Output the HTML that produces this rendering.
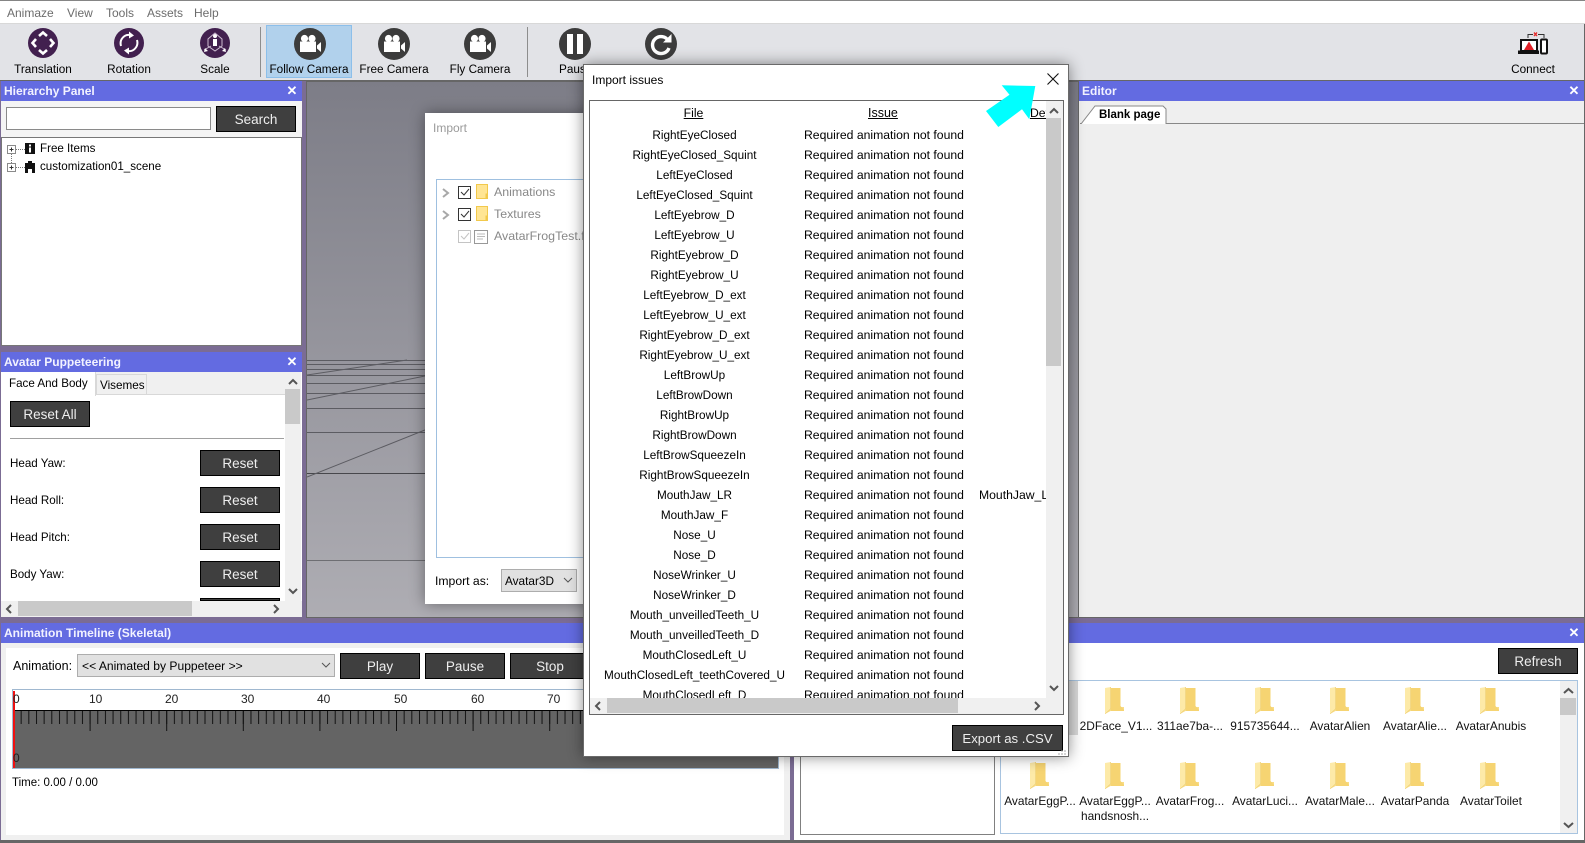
<!DOCTYPE html>
<html><head><meta charset="utf-8"><title>Animaze</title>
<style>
html,body{margin:0;padding:0;width:1585px;height:843px;overflow:hidden;background:#7b6c94;font-family:"Liberation Sans",sans-serif;font-size:12.5px;color:#000}
div,span,svg{position:absolute;box-sizing:border-box}
.t{white-space:nowrap;line-height:16px;height:16px;font-size:11.75px}
.c{text-align:center}
.title{background:#636be1;color:#f2f2ff;font-weight:bold;font-size:12px;line-height:20px;height:20px;padding-left:3px;white-space:nowrap}
.x{color:#fff;font-size:13px;font-weight:bold;width:12px;height:20px;line-height:20px;text-align:center}
.btn{background:#3f3f3f;border:1px solid #000;color:#eee;text-align:center;font-size:13.5px;white-space:nowrap}
.lab{font-size:11.6px;white-space:nowrap;line-height:16px;height:16px}
.sb{background:#f0f0f0}
.th{background:#c9c9c9}
.r{left:0;width:456px;height:20px;line-height:20px;white-space:nowrap;font-size:12.2px}
.r b{font-weight:normal;font-size:11.75px;position:absolute;left:4px;width:201px;text-align:center;top:1px}
.r i{font-style:normal;position:absolute;left:214px;top:0}
.tl{font-size:12px;line-height:14px;height:14px;top:692px;color:#222}
.fn{width:76px;text-align:center;font-size:11.9px;line-height:15px;white-space:nowrap;color:#111}
</style></head><body>
<svg width="0" height="0" style="position:absolute">
<defs>
<symbol id="folder" viewBox="0 0 19 27"><path d="M0 1H13V20H19V24H5.5L0 27Z" fill="#f8dd88"/><path d="M0 1L6 0V21L0 27Z" fill="#fdeaa8"/><path d="M6 1H15.5V19L19 23V24H6Z" fill="#f6d472"/><path d="M5.5 0V22L0 27" fill="none" stroke="#e9c765" stroke-width=".5"/></symbol>
<symbol id="cam" viewBox="0 0 32 32"><circle cx="16" cy="16" r="16" fill="#3c3c3c"/><circle cx="10.5" cy="10.5" r="3.6" fill="#fff"/><circle cx="18" cy="10.5" r="3.6" fill="#fff"/><path d="M6 13.5H22V24H6Z" fill="#fff"/><path d="M23 17.5L27 14V24L23 20.5Z" fill="#fff"/></symbol>
<symbol id="sf" viewBox="0 0 12 15"><path d="M.5.5H11.5V14.5H.5Z" fill="#ffe594" stroke="#f2c94c"/><path d="M9.500 9.500H11.500V14.500H9.500Z" fill="#f2c94c"/></symbol>
</defs>
</svg>

<!-- menu -->
<div style="left:0;top:0;width:1585px;height:24px;background:#fff;border-top:1px solid #858585;border-bottom:1px solid #d8d8d8"></div>
<div class="t" style="left:7px;top:5px;color:#6c6c6c;font-size:12px">Animaze</div>
<div class="t" style="left:67px;top:5px;color:#6c6c6c;font-size:12px">View</div>
<div class="t" style="left:106px;top:5px;color:#6c6c6c;font-size:12px">Tools</div>
<div class="t" style="left:147px;top:5px;color:#6c6c6c;font-size:12px">Assets</div>
<div class="t" style="left:194px;top:5px;color:#6c6c6c;font-size:12px">Help</div>

<!-- toolbar -->
<div style="left:0;top:24px;width:1585px;height:57px;background:#e2e3e7;border-bottom:1px solid #666"></div>
<div style="left:260px;top:27px;width:1px;height:50px;background:#8d8d8d"></div>
<div style="left:527px;top:27px;width:1px;height:50px;background:#8d8d8d"></div>
<div style="left:266px;top:25px;width:86px;height:53px;background:#b1d1ec;border:1px solid #8cbfea"></div>

<svg style="left:28px;top:28px" width="30" height="30" viewBox="0 0 30 30"><circle cx="15" cy="15" r="15" fill="#42204f"/><path d="M11 8L15 4.500L19 8M11 22L15 25.500L19 22M8 11L4.500 15L8 19M22 11L25.500 15L22 19" fill="none" stroke="#fff" stroke-width="2.600"/></svg>
<svg style="left:114px;top:28px" width="30" height="30" viewBox="0 0 30 30"><circle cx="15" cy="15" r="15" fill="#42204f"/><path d="M7 18C5 11 11 6 16 7M23 12C25 19 19 24 14 23" fill="none" stroke="#fff" stroke-width="2"/><path d="M15 3.500L20 7.500L15 10.500ZM15 26.500L10 22.500L15 19.500Z" fill="#fff"/></svg>
<svg style="left:200px;top:28px" width="30" height="30" viewBox="0 0 30 30"><circle cx="15" cy="15" r="15" fill="#42204f"/><circle cx="15" cy="8" r="2" fill="#fff"/><path d="M13 11H17V18H13Z" fill="#fff"/><path d="M15 5L8 11V18L15 23L22 18V11ZM4 22L11 18M26 22L19 18" fill="none" stroke="#cdbcd2" stroke-width="1"/><path d="M4 24L5 20L8 23ZM26 24L25 20L22 23Z" fill="#fff"/></svg>
<svg style="left:294px;top:28px" width="32" height="32"><use href="#cam"/></svg>
<svg style="left:378px;top:28px" width="32" height="32"><use href="#cam"/></svg>
<svg style="left:464px;top:28px" width="32" height="32"><use href="#cam"/></svg>
<svg style="left:559px;top:28px" width="32" height="32" viewBox="0 0 32 32"><circle cx="16" cy="16" r="16" fill="#3c3c3c"/><path d="M8 6H14V26H8ZM18 6H24V26H18Z" fill="#fff"/></svg>
<svg style="left:645px;top:28px" width="32" height="32" viewBox="0 0 32 32"><circle cx="16" cy="16" r="16" fill="#3c3c3c"/><path d="M23.500 13A8.500 8.500 0 1 0 24 20" fill="none" stroke="#fff" stroke-width="3.400"/><path d="M18 14.500H26.500V6Z" fill="#fff"/></svg>
<svg style="left:1517px;top:30px" width="32" height="26" viewBox="0 0 32 26"><path d="M11 8V4.500H16M21 4.500H27V8" fill="none" stroke="#333"/><path d="M17 2.500L20 6M20 2.500L17 6" stroke="#e53030" stroke-width="1.400"/><rect x="4" y="10" width="16" height="11" fill="#fff" stroke="#111" stroke-width="2"/><path d="M1 20.500H22V24H1Z" fill="#111"/><path d="M12 11.500L17 20H7Z" fill="#e01f26"/><rect x="24" y="9.500" width="6" height="14" rx="1" fill="#fff" stroke="#111" stroke-width="2"/></svg>

<div class="t c" style="left:3px;width:80px;top:62px">Translation</div>
<div class="t c" style="left:89px;width:80px;top:62px">Rotation</div>
<div class="t c" style="left:175px;width:80px;top:62px">Scale</div>
<div class="t c" style="left:266px;width:86px;top:62px">Follow Camera</div>
<div class="t c" style="left:352px;width:84px;top:62px">Free Camera</div>
<div class="t c" style="left:438px;width:84px;top:62px">Fly Camera</div>
<div class="t" style="left:559px;top:62px">Pause</div>
<div class="t c" style="left:621px;width:80px;top:62px">Reload Skin</div>
<div class="t c" style="left:1493px;width:80px;top:62px">Connect</div>

<!-- viewport -->
<div style="left:306px;top:81px;width:773px;height:537px;background:linear-gradient(#7d7d87,#aeadb3);border:1px solid #666"></div>
<svg style="left:307px;top:340px" width="118" height="278" viewBox="0 0 118 278"><g stroke="#5c5c62" stroke-width="1" fill="none"><path d="M0 20.500H118M0 24.500H118M0 29.500H118M0 35.500H118M0 43.500H118M0 53.500H118M0 68.500H118M0 92.500H118"/><path d="M0 133.500H118" stroke="#47474c"/><path d="M0 220.500H118" stroke="#6e6e73"/><path d="M0 35L100 20M0 60L118 36M0 137L118 90"/></g></svg>

<!-- hierarchy panel -->
<div style="left:1px;top:81px;width:301px;height:265px;background:#f4f4f4"></div>
<div class="title" style="left:1px;top:81px;width:301px">Hierarchy Panel</div>
<div class="x" style="left:286px;top:81px">✕</div>
<div style="left:6px;top:107px;width:205px;height:23px;background:#fff;border:1px solid #8a8a8a"></div>
<div class="btn" style="left:216px;top:106px;width:80px;height:26px;line-height:25px">Search</div>
<div style="left:1px;top:137px;width:301px;height:209px;background:#fff;border:1px solid #777"></div>
<svg style="left:6px;top:141px" width="20" height="34" viewBox="0 0 20 34"><g fill="#fff" stroke="#8a8a8a"><rect x="1.500" y="4.500" width="8" height="8"/><rect x="1.500" y="22.500" width="8" height="8"/></g><path d="M3.500 8.500H7.500M5.500 6.500V10.500M3.500 26.500H7.500M5.500 24.500V28.500" stroke="#333"/><path d="M10 8.500H19M10 26.500H19M5.500 13V22" stroke="#777" stroke-dasharray="1 1"/></svg>
<svg style="left:25px;top:143px" width="10" height="33" viewBox="0 0 10 33"><rect width="10" height="11" fill="#111"/><rect x="4" y="1.500" width="2" height="2" fill="#fff"/><rect x="4" y="4.500" width="2" height="5" fill="#fff"/><path d="M0 20H10V30H7V26H3V30H0Z" fill="#111"/><path d="M3 18H7V21H3Z" fill="#111"/></svg>
<div class="lab" style="left:40px;top:141px">Free Items</div>
<div class="lab" style="left:40px;top:159px">customization01_scene</div>

<!-- puppeteering -->
<div style="left:1px;top:352px;width:301px;height:265px;background:#fff"></div>
<div class="title" style="left:1px;top:352px;width:301px">Avatar Puppeteering</div>
<div class="x" style="left:286px;top:352px">✕</div>
<div style="left:1px;top:372px;width:284px;height:23px;background:#f0f0f0;border-bottom:1px solid #d8d8d8"></div>
<div style="left:1px;top:372px;width:95px;height:24px;background:#fff;border-right:1px solid #d8d8d8"></div>
<div style="left:96px;top:374px;width:51px;height:21px;background:#f0f0f0;border:1px solid #d8d8d8"></div>
<div class="lab" style="left:9px;top:376px">Face And Body</div>
<div class="lab" style="left:100px;top:378px;font-size:11.7px">Visemes</div>
<div class="btn" style="left:10px;top:401px;width:80px;height:26px;line-height:25px">Reset All</div>
<div style="left:10px;top:438px;width:274px;height:1px;background:#a0a0a0"></div>
<div class="lab" style="left:10px;top:456px">Head Yaw:</div>
<div class="lab" style="left:10px;top:493px">Head Roll:</div>
<div class="lab" style="left:10px;top:530px">Head Pitch:</div>
<div class="lab" style="left:10px;top:567px">Body Yaw:</div>
<div class="btn" style="left:200px;top:450px;width:80px;height:26px;line-height:25px">Reset</div>
<div class="btn" style="left:200px;top:487px;width:80px;height:26px;line-height:25px">Reset</div>
<div class="btn" style="left:200px;top:524px;width:80px;height:26px;line-height:25px">Reset</div>
<div class="btn" style="left:200px;top:561px;width:80px;height:26px;line-height:25px">Reset</div>
<div class="btn" style="left:200px;top:598px;width:80px;height:3px"></div>
<div class="sb" style="left:285px;top:372px;width:16px;height:229px"></div>
<div class="th" style="left:285px;top:389px;width:15px;height:35px"></div>
<svg style="left:285px;top:372px" width="16" height="229" viewBox="0 0 16 229"><path d="M4 12L8 8L12 12M4 217L8 221L12 217" fill="none" stroke="#555" stroke-width="2"/></svg>
<div class="sb" style="left:1px;top:601px;width:301px;height:16px"></div>
<div class="th" style="left:18px;top:601px;width:174px;height:15px"></div>
<svg style="left:1px;top:601px" width="300" height="16" viewBox="0 0 300 16"><path d="M10 4L6 8L10 12M273 4L277 8L273 12" fill="none" stroke="#555" stroke-width="2"/></svg>

<!-- editor -->
<div style="left:1079px;top:81px;width:505px;height:537px;background:#efefef;border-bottom:1px solid #666"></div>
<div class="title" style="left:1079px;top:81px;width:505px">Editor</div>
<div class="x" style="left:1568px;top:81px">✕</div>
<div style="left:1080px;top:123px;width:504px;height:1px;background:#888"></div>
<svg style="left:1080px;top:105px" width="90" height="19" viewBox="0 0 90 19"><path d="M1 19L15 1H83L86 4V19" fill="#fff" stroke="#888"/></svg>
<div class="lab" style="left:1099px;top:107px;font-weight:bold;font-size:11.5px;color:#000">Blank page</div>

<!-- import dialog behind -->
<div style="left:425px;top:113px;width:200px;height:491px;background:#fff;box-shadow:0 0 14px rgba(0,0,0,.4)"></div>
<div class="lab" style="left:433px;top:120px;color:#9a9a9a;font-size:12px">Import</div>
<div style="left:436px;top:179px;width:170px;height:379px;border:1px solid #9fc0e0;background:#fff"></div>
<svg style="left:440px;top:186px" width="50" height="60" viewBox="0 0 50 60"><path d="M3 3L8 7L3 11M3 25L8 29L3 33" fill="none" stroke="#a8a8a8" stroke-width="2"/><rect x="18.500" y="0.500" width="12" height="12" fill="#fff" stroke="#333"/><rect x="18.500" y="22.500" width="12" height="12" fill="#fff" stroke="#333"/><rect x="18.500" y="44.500" width="12" height="12" fill="#fff" stroke="#c4c4c4"/><path d="M21 6L24 9L29 3M21 28L24 31L29 25" fill="none" stroke="#333"/><path d="M21 50L24 53L29 47" fill="none" stroke="#c4c4c4"/><rect x="34.500" y="44.500" width="13" height="13" fill="#fff" stroke="#999"/><path d="M37 48H45M37 50.500H45M37 53H43" stroke="#bbb"/></svg>
<svg style="left:476px;top:184px" width="12" height="15"><use href="#sf"/></svg>
<svg style="left:476px;top:206px" width="12" height="15"><use href="#sf"/></svg>
<div class="lab" style="left:494px;top:184px;color:#888;font-size:12.4px">Animations</div>
<div class="lab" style="left:494px;top:206px;color:#888;font-size:12.4px">Textures</div>
<div class="lab" style="left:494px;top:228px;color:#888;font-size:12.4px">AvatarFrogTest.fbx</div>
<div class="lab" style="left:435px;top:573px;font-size:12.2px">Import as:</div>
<div style="left:501px;top:569px;width:76px;height:23px;background:#e1e1e1;border:1px solid #adadad"></div>
<div class="lab" style="left:505px;top:573px;font-size:11.8px">Avatar3D</div>
<svg style="left:563px;top:577px" width="10" height="7" viewBox="0 0 10 7"><path d="M1 1L5 5L9 1" fill="none" stroke="#555"/></svg>

<!-- timeline panel -->
<div style="left:1px;top:623px;width:789px;height:217px;background:#f0f0f0"></div>
<div class="title" style="left:1px;top:623px;width:789px">Animation Timeline (Skeletal)</div>
<div style="left:6px;top:648px;width:778px;height:187px;background:#fff"></div>
<div class="lab" style="left:13px;top:658px;font-size:12.5px">Animation:</div>
<div style="left:77px;top:654px;width:258px;height:23px;background:#e1e1e1;border:1px solid #adadad"></div>
<div class="lab" style="left:82px;top:658px;font-size:12.1px">&lt;&lt; Animated by Puppeteer &gt;&gt;</div>
<svg style="left:321px;top:662px" width="10" height="7" viewBox="0 0 10 7"><path d="M1 1L5 5L9 1" fill="none" stroke="#555"/></svg>
<div class="btn" style="left:340px;top:653px;width:80px;height:26px;line-height:25px">Play</div>
<div class="btn" style="left:425px;top:653px;width:80px;height:26px;line-height:25px">Pause</div>
<div class="btn" style="left:510px;top:653px;width:80px;height:26px;line-height:25px">Stop</div>
<div style="left:12px;top:689px;width:767px;height:80px;border:1px solid #a0b8d0;background:#646464"></div>
<div style="left:13px;top:690px;width:765px;height:21px;background:#fff;border-bottom:1px solid #000"></div>
<svg style="left:13px;top:711px" width="765" height="22"><defs><pattern id="mn" x="0" y="0" width="7.660" height="22" patternUnits="userSpaceOnUse"><rect width="1" height="13" fill="#111"/></pattern><pattern id="mj" x="0" y="0" width="76.600" height="22" patternUnits="userSpaceOnUse"><rect width="1" height="20" fill="#111"/></pattern></defs><rect width="765" height="22" fill="url(#mn)"/><rect width="765" height="22" fill="url(#mj)"/></svg>
<div style="left:13px;top:691px;width:2px;height:77px;background:#f01010"></div>
<div class="tl" style="left:13px">0</div>
<div class="tl" style="left:89px">10</div>
<div class="tl" style="left:165px">20</div>
<div class="tl" style="left:241px">30</div>
<div class="tl" style="left:317px">40</div>
<div class="tl" style="left:394px">50</div>
<div class="tl" style="left:471px">60</div>
<div class="tl" style="left:547px">70</div>
<div class="tl" style="left:13px;top:751px">0</div>
<div class="lab" style="left:12px;top:775px;font-size:11.5px">Time: 0.00 / 0.00</div>

<!-- assets panel -->
<div style="left:794px;top:623px;width:790px;height:217px;background:#fff"></div>
<div class="title" style="left:794px;top:623px;width:790px"></div>
<div class="x" style="left:1568px;top:623px">✕</div>
<div class="btn" style="left:1498px;top:648px;width:80px;height:26px;line-height:25px">Refresh</div>
<div style="left:800px;top:680px;width:195px;height:155px;background:#fff;border:1px solid #808080"></div>
<div style="left:1000px;top:680px;width:578px;height:154px;background:#fff;border:1px solid #a8c4e0"></div>
<div style="left:1002px;top:681px;width:76px;height:54px;background:#d9d9d9"></div>
<div class="sb" style="left:1560px;top:681px;width:17px;height:152px"></div>
<div class="th" style="left:1560px;top:698px;width:16px;height:17px"></div>
<svg style="left:1560px;top:681px" width="17" height="152" viewBox="0 0 17 152"><path d="M4 12L8.500 8L13 12M4 142L8.500 146L13 142" fill="none" stroke="#555" stroke-width="2"/></svg>
<svg style="left:1105px;top:687px" width="19" height="27"><use href="#folder"/></svg>
<svg style="left:1180px;top:687px" width="19" height="27"><use href="#folder"/></svg>
<svg style="left:1255px;top:687px" width="19" height="27"><use href="#folder"/></svg>
<svg style="left:1330px;top:687px" width="19" height="27"><use href="#folder"/></svg>
<svg style="left:1405px;top:687px" width="19" height="27"><use href="#folder"/></svg>
<svg style="left:1480px;top:687px" width="19" height="27"><use href="#folder"/></svg>
<svg style="left:1030px;top:762px" width="19" height="27"><use href="#folder"/></svg>
<svg style="left:1105px;top:762px" width="19" height="27"><use href="#folder"/></svg>
<svg style="left:1180px;top:762px" width="19" height="27"><use href="#folder"/></svg>
<svg style="left:1255px;top:762px" width="19" height="27"><use href="#folder"/></svg>
<svg style="left:1330px;top:762px" width="19" height="27"><use href="#folder"/></svg>
<svg style="left:1405px;top:762px" width="19" height="27"><use href="#folder"/></svg>
<svg style="left:1480px;top:762px" width="19" height="27"><use href="#folder"/></svg>
<div class="fn" style="left:1078px;top:719px">2DFace_V1...</div>
<div class="fn" style="left:1152px;top:719px">311ae7ba-...</div>
<div class="fn" style="left:1227px;top:719px">915735644...</div>
<div class="fn" style="left:1302px;top:719px">AvatarAlien</div>
<div class="fn" style="left:1377px;top:719px">AvatarAlie...</div>
<div class="fn" style="left:1453px;top:719px">AvatarAnubis</div>
<div class="fn" style="left:1002px;top:794px">AvatarEggP...</div>
<div class="fn" style="left:1077px;top:794px">AvatarEggP...<br>handsnosh...</div>
<div class="fn" style="left:1152px;top:794px">AvatarFrog...</div>
<div class="fn" style="left:1227px;top:794px">AvatarLuci...</div>
<div class="fn" style="left:1302px;top:794px">AvatarMale...</div>
<div class="fn" style="left:1377px;top:794px">AvatarPanda</div>
<div class="fn" style="left:1453px;top:794px">AvatarToilet</div>

<div style="left:0;top:840px;width:1585px;height:3px;background:#666"></div>
<div style="left:1584px;top:24px;width:1px;height:819px;background:#666"></div>

<!-- import issues dialog -->
<div style="left:583px;top:64px;width:486px;height:693px;background:#fff;border:1px solid #6a6a6a;box-shadow:0 0 14px rgba(0,0,0,.45)"></div>
<div class="lab" style="left:592px;top:72px;font-size:12px">Import issues</div>
<svg style="left:1047px;top:73px" width="12" height="12" viewBox="0 0 12 12"><path d="M.5.500L11.500 11.500M11.500.500L.5 11.500" stroke="#111" stroke-width="1.100"/></svg>
<div style="left:589px;top:100px;width:475px;height:615px;border:1px solid #666;background:#fff"></div>
<div style="left:590px;top:101px;width:456px;height:597px;overflow:hidden;background:#fff">
<div class="r" style="top:2px"><b style="text-decoration:underline;font-size:12.2px;left:3px;top:0">File</b><i style="left:278px;text-decoration:underline;font-size:12.5px">Issue</i><i style="left:440px;text-decoration:underline">Details</i></div>
<div class="r" style="top:24px"><b>RightEyeClosed</b><i>Required animation not found</i></div>
<div class="r" style="top:44px"><b>RightEyeClosed_Squint</b><i>Required animation not found</i></div>
<div class="r" style="top:64px"><b>LeftEyeClosed</b><i>Required animation not found</i></div>
<div class="r" style="top:84px"><b>LeftEyeClosed_Squint</b><i>Required animation not found</i></div>
<div class="r" style="top:104px"><b>LeftEyebrow_D</b><i>Required animation not found</i></div>
<div class="r" style="top:124px"><b>LeftEyebrow_U</b><i>Required animation not found</i></div>
<div class="r" style="top:144px"><b>RightEyebrow_D</b><i>Required animation not found</i></div>
<div class="r" style="top:164px"><b>RightEyebrow_U</b><i>Required animation not found</i></div>
<div class="r" style="top:184px"><b>LeftEyebrow_D_ext</b><i>Required animation not found</i></div>
<div class="r" style="top:204px"><b>LeftEyebrow_U_ext</b><i>Required animation not found</i></div>
<div class="r" style="top:224px"><b>RightEyebrow_D_ext</b><i>Required animation not found</i></div>
<div class="r" style="top:244px"><b>RightEyebrow_U_ext</b><i>Required animation not found</i></div>
<div class="r" style="top:264px"><b>LeftBrowUp</b><i>Required animation not found</i></div>
<div class="r" style="top:284px"><b>LeftBrowDown</b><i>Required animation not found</i></div>
<div class="r" style="top:304px"><b>RightBrowUp</b><i>Required animation not found</i></div>
<div class="r" style="top:324px"><b>RightBrowDown</b><i>Required animation not found</i></div>
<div class="r" style="top:344px"><b>LeftBrowSqueezeIn</b><i>Required animation not found</i></div>
<div class="r" style="top:364px"><b>RightBrowSqueezeIn</b><i>Required animation not found</i></div>
<div class="r" style="top:384px"><b>MouthJaw_LR</b><i>Required animation not found</i><i style="left:389px">MouthJaw_LR</i></div>
<div class="r" style="top:404px"><b>MouthJaw_F</b><i>Required animation not found</i></div>
<div class="r" style="top:424px"><b>Nose_U</b><i>Required animation not found</i></div>
<div class="r" style="top:444px"><b>Nose_D</b><i>Required animation not found</i></div>
<div class="r" style="top:464px"><b>NoseWrinker_U</b><i>Required animation not found</i></div>
<div class="r" style="top:484px"><b>NoseWrinker_D</b><i>Required animation not found</i></div>
<div class="r" style="top:504px"><b>Mouth_unveilledTeeth_U</b><i>Required animation not found</i></div>
<div class="r" style="top:524px"><b>Mouth_unveilledTeeth_D</b><i>Required animation not found</i></div>
<div class="r" style="top:544px"><b>MouthClosedLeft_U</b><i>Required animation not found</i></div>
<div class="r" style="top:564px"><b>MouthClosedLeft_teethCovered_U</b><i>Required animation not found</i></div>
<div class="r" style="top:584px"><b>MouthClosedLeft_D</b><i>Required animation not found</i></div>
</div>
<div class="sb" style="left:1046px;top:101px;width:17px;height:597px"></div>
<div class="th" style="left:1046px;top:118px;width:15px;height:248px"></div>
<svg style="left:1046px;top:101px" width="17" height="597" viewBox="0 0 17 597"><path d="M4 12L8 8L12 12M4 585L8 589L12 585" fill="none" stroke="#555" stroke-width="2"/></svg>
<div class="sb" style="left:590px;top:698px;width:473px;height:16px"></div>
<div class="th" style="left:607px;top:698px;width:351px;height:15px"></div>
<svg style="left:590px;top:698px" width="473" height="16" viewBox="0 0 473 16"><path d="M10 4L6 8L10 12M445 4L449 8L445 12" fill="none" stroke="#555" stroke-width="2"/></svg>
<div class="btn" style="left:952px;top:725px;width:111px;height:26px;line-height:25px;font-size:13.2px">Export as .CSV</div>
<svg style="left:1057px;top:749px" width="10" height="6" viewBox="0 0 10 6"><path d="M1 5H3M4 5H6M7 5H9M4 2H6M7 2H9" stroke="#aaa"/></svg>

<!-- cyan arrow -->
<svg style="left:980px;top:80px" width="60" height="52" viewBox="980 80 60 52"><path d="M1001.700 85.300L1035.300 86L1029.300 119.300L1022 109.300L998.300 127L986 111L1009.500 94.800Z" fill="#00ffff"/></svg>
</body></html>
